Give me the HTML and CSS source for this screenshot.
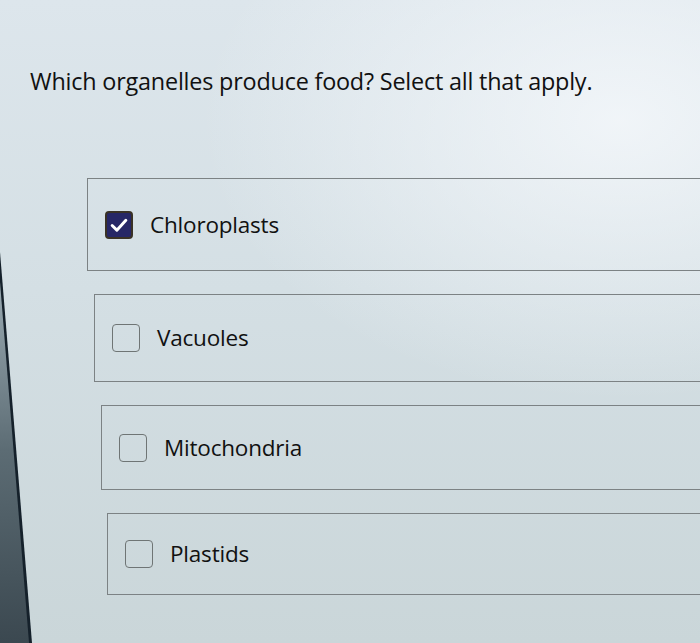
FILE: index.html
```html
<!DOCTYPE html>
<html>
<head>
<meta charset="utf-8">
<link rel="stylesheet" href="styles.css">
</head>
<body>
<div class="screen">
  <p class="question">Which organelles produce food? Select all that apply.</p>
  <div class="options">
    <label class="option o1">
      <span class="box checked">
        <svg viewBox="0 0 28 28" width="24" height="24"><path d="M6 14.5 L11.5 20 L22 8.5" fill="none" stroke="#fff" stroke-width="3.4" stroke-linecap="round" stroke-linejoin="round"/></svg>
      </span>
      <span class="label">Chloroplasts</span>
    </label>
    <label class="option o2">
      <span class="box"></span>
      <span class="label">Vacuoles</span>
    </label>
    <label class="option o3">
      <span class="box"></span>
      <span class="label">Mitochondria</span>
    </label>
    <label class="option o4">
      <span class="box"></span>
      <span class="label">Plastids</span>
    </label>
  </div>
  <div class="bezel-edge"></div>
  <div class="bezel"></div>
</div>
</body>
</html>
```

FILE: styles.css
```css
html, body {
  margin: 0;
  padding: 0;
}
body {
  width: 700px;
  height: 643px;
  overflow: hidden;
  font-family: "Open Sans", "Noto Sans", sans-serif;
  color: #111;
}
.screen {
  position: relative;
  width: 700px;
  height: 643px;
  background:
    radial-gradient(ellipse 600px 400px at 620px 120px, rgba(246,249,252,0.8), rgba(246,249,252,0) 70%),
    linear-gradient(180deg, #dde6ec 0%, #d4dfe4 45%, #cad6d9 100%);
  display: flex;
  flex-direction: column;
}
.question {
  margin: 66px 0 0 30px;
  font-size: 23.4px;
  line-height: 30px;
  letter-spacing: -0.2px;
}
.options {
  margin-top: 82px;
  display: flex;
  flex-direction: column;
  gap: 23px;
}
.option {
  display: flex;
  align-items: center;
  border: 1.5px solid #7c8284;
  border-right: none;
  box-sizing: border-box;
  padding-left: 17px;
}
.o1 { margin-left: 87px; height: 93px; }
.o2 { margin-left: 94px; height: 88px; }
.o3 { margin-left: 101px; height: 85px; }
.o4 { margin-left: 107px; height: 82px; }
.box {
  width: 28px;
  height: 28px;
  box-sizing: border-box;
  border: 1.5px solid #6f7575;
  border-radius: 4px;
  flex: none;
  display: flex;
  align-items: center;
  justify-content: center;
}
.box.checked {
  background: #272766;
  border-color: #3a3226;
  border-width: 2px;
}
.label {
  margin-left: 17px;
  font-size: 22.5px;
  line-height: 30px;
  letter-spacing: -0.2px;
}
.bezel-edge {
  position: absolute;
  left: 0;
  top: 0;
  width: 40px;
  height: 643px;
  background: #15212b;
  clip-path: polygon(0 252px, 32px 643px, 0 643px);
}
.bezel {
  position: absolute;
  left: 0;
  top: 0;
  width: 40px;
  height: 643px;
  background: linear-gradient(180deg, #b4c2c8 0%, #98a8b0 45%, #5c6c74 70%, #3b4850 100%);
  clip-path: polygon(0 282px, 29px 643px, 0 643px);
}
```
